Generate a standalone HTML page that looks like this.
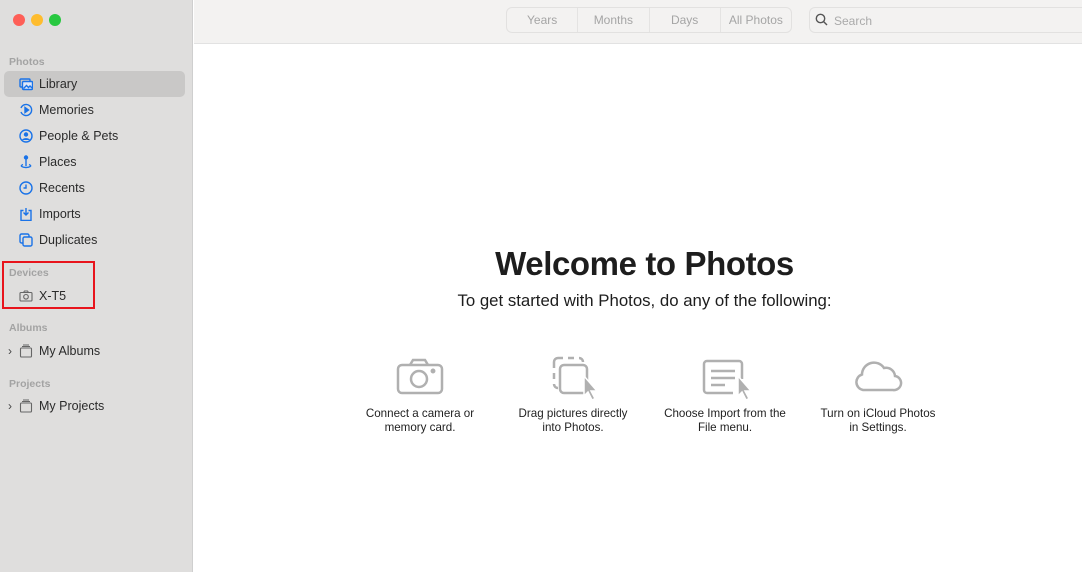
<!DOCTYPE html>
<html><head><style>
*{margin:0;padding:0;box-sizing:border-box}
body{width:1082px;height:572px;overflow:hidden;font-family:"Liberation Sans",sans-serif;background:#fff;position:relative}
.sb{position:absolute;left:0;top:0;width:193px;height:572px;background:#dfdedd;border-right:1px solid #cfcfcf}
.dot{position:absolute;top:14px;width:12px;height:12px;border-radius:50%}
.hd{position:absolute;left:9px;font-size:10.5px;color:#a3a3a3;font-weight:bold}
.it{position:absolute;left:39px;font-size:12.5px;color:#2b2b2b}
.ic{position:absolute;left:19px;width:14px;height:14px}
.tb{position:absolute;left:194px;top:0;right:0;height:44px;background:#f3f2f1;border-bottom:1px solid #e2e2e2}
.seg{position:absolute;left:312px;top:7px;width:286px;height:26px;border:1px solid #e2e1e0;border-radius:6px;display:flex}
.seg div{flex:1;text-align:center;font-size:12px;color:#a5a5a5;line-height:24px;border-right:1px solid #e4e3e2}
.seg div:last-child{border:none}
.srch{position:absolute;left:615px;top:7px;right:0;height:26px;border:1px solid #e2e1e0;border-right:none;border-radius:6px 0 0 6px;font-size:12px;color:#aaa;line-height:26px;padding-left:24px}
.cap{position:absolute;top:407px;width:160px;text-align:center;font-size:11.6px;color:#222;line-height:14px}
</style></head><body>
<div class="sb">
<div class="dot" style="left:13px;background:#fe5f57"></div>
<div class="dot" style="left:31px;background:#febc2e"></div>
<div class="dot" style="left:49px;background:#28c840"></div>
<div class="hd" style="top:56px">Photos</div>
<div style="position:absolute;left:4px;top:71px;width:181px;height:26px;background:#c9c8c7;border-radius:5px"></div>
<svg class="ic" style="top:77px" viewBox="0 0 14 14" fill="none" stroke="#1a73e8" stroke-width="1.4"><rect x="1" y="2" width="10" height="8" rx="1"/><rect x="3.5" y="4.5" width="10" height="8" rx="1" fill="#dfe8f8"/><path d="M4.5 11.5l3-3 2 2 1.5-1.5 2 2"/></svg>
<div class="it" style="top:77px">Library</div>
<svg class="ic" style="top:103px" viewBox="0 0 14 14" fill="none" stroke="#1a73e8" stroke-width="1.4"><path d="M2 5a5.5 5.5 0 1 1 0 4"/><path d="M6 4.5v5l3.5-2.5z" fill="#1a73e8"/></svg>
<div class="it" style="top:103px">Memories</div>
<svg class="ic" style="top:129px" viewBox="0 0 14 14"><circle cx="7" cy="7" r="6" fill="none" stroke="#1a73e8" stroke-width="1.4"/><circle cx="7" cy="5.5" r="2.2" fill="#1a73e8"/><path d="M3 11c1-2.5 7-2.5 8 0" fill="#1a73e8"/></svg>
<div class="it" style="top:129px">People &amp; Pets</div>
<svg class="ic" style="top:155px" viewBox="0 0 14 14" fill="none" stroke="#1a73e8" stroke-width="1.4"><circle cx="7" cy="2.5" r="1.5" fill="#1a73e8"/><path d="M7 4v7M4 9.5c-4 1.5 0 3 3 3s7-1.5 3-3"/></svg>
<div class="it" style="top:155px">Places</div>
<svg class="ic" style="top:181px" viewBox="0 0 14 14" fill="none" stroke="#1a73e8" stroke-width="1.4"><circle cx="7" cy="7" r="6"/><path d="M7 3.5V7H4.5"/></svg>
<div class="it" style="top:181px">Recents</div>
<svg class="ic" style="top:207px" viewBox="0 0 14 14" fill="none" stroke="#1a73e8" stroke-width="1.4"><path d="M4.5 3.5H2v10h10v-10H9.5"/><path d="M7 1v7M4.5 5.5L7 8l2.5-2.5"/></svg>
<div class="it" style="top:207px">Imports</div>
<svg class="ic" style="top:233px" viewBox="0 0 14 14" fill="none" stroke="#1a73e8" stroke-width="1.4"><rect x="1" y="1" width="9" height="9" rx="1.5"/><rect x="4" y="4" width="9" height="9" rx="1.5" fill="#dfdedd"/></svg>
<div class="it" style="top:233px">Duplicates</div>
<div class="hd" style="top:267px">Devices</div>
<svg class="ic" style="top:289px" viewBox="0 0 14 14" fill="none" stroke="#666" stroke-width="1.1"><rect x="1" y="3.5" width="12" height="8.5" rx="1"/><path d="M4.5 3.5l1-1.5h3l1 1.5"/><circle cx="7" cy="7.8" r="2.3"/></svg>
<div class="it" style="top:289px">X-T5</div>
<div style="position:absolute;left:2px;top:261px;width:93px;height:48px;border:2px solid #e8141c"></div>
<div class="hd" style="top:322px">Albums</div>
<div style="position:absolute;left:8px;top:344px;font-size:12px;color:#444">›</div>
<svg class="ic" style="top:344px" viewBox="0 0 14 14" fill="none" stroke="#666" stroke-width="1.1"><rect x="1.5" y="4" width="11" height="9" rx="1"/><path d="M3 2.5h8M4 1h6"/></svg>
<div class="it" style="top:344px">My Albums</div>
<div class="hd" style="top:378px">Projects</div>
<div style="position:absolute;left:8px;top:399px;font-size:12px;color:#444">›</div>
<svg class="ic" style="top:399px" viewBox="0 0 14 14" fill="none" stroke="#666" stroke-width="1.1"><rect x="1.5" y="4" width="11" height="9" rx="1"/><path d="M3 2.5h8M4 1h6"/></svg>
<div class="it" style="top:399px">My Projects</div>
</div>
<div class="tb">
<div class="seg"><div>Years</div><div>Months</div><div>Days</div><div>All Photos</div></div>
<div class="srch">Search</div>
<svg style="position:absolute;left:621px;top:13px" width="13" height="13" viewBox="0 0 13 13" fill="none" stroke="#555" stroke-width="1.4"><circle cx="5.5" cy="5.5" r="4.2"/><path d="M8.5 8.5l3.5 3.5"/></svg>
</div>
<div style="position:absolute;left:200px;width:889px;top:245px;text-align:center;font-size:33px;font-weight:bold;color:#1d1d1d;letter-spacing:-0.4px">Welcome to Photos</div>
<div style="position:absolute;left:200px;width:889px;top:291px;text-align:center;font-size:16.8px;color:#1d1d1d">To get started with Photos, do any of the following:</div>
<svg style="position:absolute;left:396px;top:358px" width="48" height="38" viewBox="0 0 48 38" fill="none" stroke="#b0b0b0" stroke-width="2.5"><rect x="2" y="7" width="44" height="28" rx="4"/><path d="M14 7l3-5h12l3 5"/><circle cx="23" cy="21" r="8"/><circle cx="37" cy="13" r="1.2" fill="#b0b0b0"/></svg>
<svg style="position:absolute;left:551px;top:356px" width="48" height="46" viewBox="0 0 48 46" fill="none" stroke="#b0b0b0" stroke-width="2.5"><path d="M3 12V6a4 4 0 0 1 4-4h5M17 2h6M28 2a4 4 0 0 1 4 4M3 17v6M3 28a4 4 0 0 0 4 4"/><rect x="9" y="9" width="27" height="28" rx="4" fill="#fff"/><path d="M33 20l0 20 4-4 4 8 3-1.5-4-7.5h6z" fill="#b0b0b0" stroke="#fff" stroke-width="1.5"/></svg>
<svg style="position:absolute;left:702px;top:359px" width="52" height="42" viewBox="0 0 52 42" fill="none" stroke="#b0b0b0" stroke-width="2.5"><path d="M40 20V5a3 3 0 0 0-3-3H5a3 3 0 0 0-3 3v26a3 3 0 0 0 3 3h26"/><path d="M9 12h24M9 19h24M9 26h14"/><path d="M36 17l0 20 4-4 4 8 3-1.5-4-7.5h6z" fill="#b0b0b0" stroke="#fff" stroke-width="1.5"/></svg>
<svg style="position:absolute;left:853px;top:359px" width="50" height="34" viewBox="0 0 50 34" fill="none" stroke="#b0b0b0" stroke-width="2.5"><path d="M10 31a8 8 0 0 1-1-15.5A12 12 0 0 1 31 9a9 9 0 0 1 11 8 7 7 0 0 1-2 14z"/></svg>
<div class="cap" style="left:340px">Connect a camera or<br>memory card.</div>
<div class="cap" style="left:493px">Drag pictures directly<br>into Photos.</div>
<div class="cap" style="left:645px">Choose Import from the<br>File menu.</div>
<div class="cap" style="left:798px">Turn on iCloud Photos<br>in Settings.</div>
</body></html>
